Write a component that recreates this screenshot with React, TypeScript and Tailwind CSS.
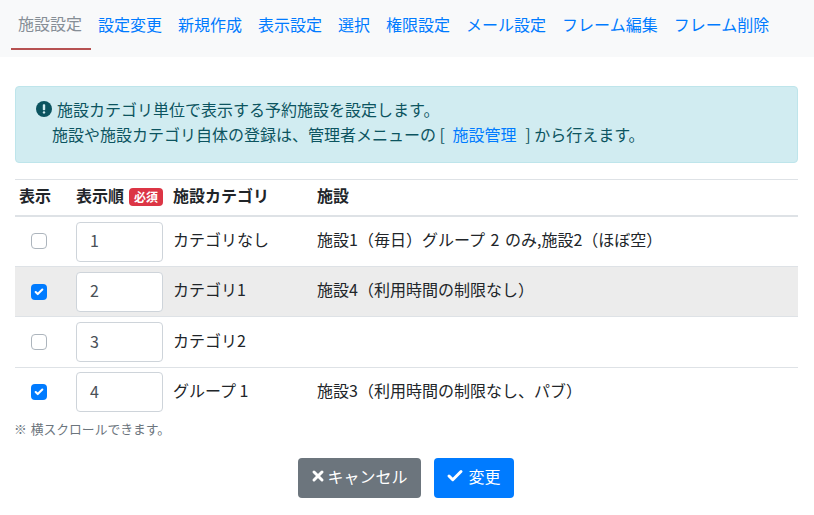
import { Check, X } from "lucide-react";

const tabs = ["設定変更", "新規作成", "表示設定", "選択", "権限設定", "メール設定", "フレーム編集", "フレーム削除"];

const rows = [
  { order: "1", checked: false, category: "カテゴリなし", facility: "施設1（毎日）グループ 2 のみ,施設2（ほぼ空）", height: "h-[51px]", inputPad: "pt-[1px]" },
  { order: "2", checked: true, category: "カテゴリ1", facility: "施設4（利用時間の制限なし）", height: "h-[50px]", inputPad: "", active: true },
  { order: "3", checked: false, category: "カテゴリ2", facility: "", height: "h-[51px]", inputPad: "" },
  { order: "4", checked: true, category: "グループ 1", facility: "施設3（利用時間の制限なし、パブ）", height: "h-[49px]", inputPad: "" },
];

export default function App() {
  return (
    <div className="w-[814px] h-[515px] overflow-hidden bg-white text-[#212529] text-base font-['Noto_Sans_CJK_JP','Noto_Sans',sans-serif]">
      <nav className="flex h-[57px] bg-[#f8f9fa] pl-[11px] pt-[1px]">
        <div className="h-[49px] pl-[7px] pr-[9px] pb-1 flex items-center text-[#868e96] border-b-2 border-[#b65151]">施設設定</div>
        {tabs.map((tab) => (
          <a key={tab} className="h-[49px] pl-[7px] pr-[9px] pb-1 flex items-center text-[#007bff]">{tab}</a>
        ))}
      </nav>

      <div className="pl-[15px] pr-[16px]">
        <div className="mt-[29px] h-[77px] rounded border border-[#bee5eb] bg-[#d1ecf1] text-[#0c5460] pl-5 pt-[10px] leading-6">
          <div className="flex items-center">
            <svg viewBox="0 0 16 16" className="w-4 h-4 mr-[5px] shrink-0">
              <circle cx="8" cy="8" r="8" fill="#0c5460" />
              <rect x="6.8" y="3.2" width="2.4" height="6" rx="0.8" fill="#d1ecf1" />
              <rect x="6.8" y="10.2" width="2.4" height="2.4" rx="1.2" fill="#d1ecf1" />
            </svg>
            <span>施設カテゴリ単位で表示する予約施設を設定します。</span>
          </div>
          <div className="pl-4 mt-[1px]">
            施設や施設カテゴリ自体の登録は、管理者メニューの [ <a className="text-[#007bff] ml-1 mr-[5px]">施設管理</a> ] から行えます。
          </div>
        </div>

        <table className="mt-4 w-[783px] table-fixed border-collapse">
          <thead>
            <tr className="border-t border-b-2 border-t-[#dee2e6] border-b-[#dee2e6] h-[36px] text-left">
              <th className="w-[57px] px-1 pb-1 font-bold">表示</th>
              <th className="w-[97px] px-1 pb-1 font-bold">
                <span className="flex items-center whitespace-nowrap">
                  表示順
                  <span className="ml-[5px] mt-1 rounded bg-[#dc3545] text-white text-[12px] leading-none font-bold px-[5px] py-[3px]">必須</span>
                </span>
              </th>
              <th className="w-[144px] px-1 pb-1 font-bold">施設カテゴリ</th>
              <th className="px-1 pb-1 font-bold">施設</th>
            </tr>
          </thead>
          <tbody>
            {rows.map((row) => (
              <tr key={row.order} className={`${row.height} border-b border-[#dee2e6] last:border-b-0 ${row.active ? "bg-[#ececec]" : ""}`}>
                <td className="px-1">
                  <div className="flex justify-center pr-[10px]">
                    {row.checked ? (
                      <span className="w-4 h-4 rounded bg-[#007bff] flex items-center justify-center">
                        <Check className="w-2.5 h-2.5 text-white" strokeWidth={5} />
                      </span>
                    ) : (
                      <span className="w-4 h-4 rounded border border-[#adb5bd] bg-white" />
                    )}
                  </div>
                </td>
                <td className={`px-1 ${row.inputPad}`}>
                  <div className="w-[87px] h-10 rounded border border-[#ced4da] bg-white flex items-center pl-[13px] pb-[3px] text-[#495057]">{row.order}</div>
                </td>
                <td className="px-1 pb-[5px]">{row.category}</td>
                <td className="px-1 pb-[5px] whitespace-nowrap [word-spacing:2px]">{row.facility}</td>
              </tr>
            ))}
          </tbody>
        </table>

        <p className="mt-[3px] -ml-[1px] text-[12.8px] leading-[18px] text-[#6c757d]">
          <span className="mr-[1px]">※</span> 横スクロールできます。
        </p>

        <div className="mt-5 flex justify-center gap-[13px] pr-[2px]">
          <button className="w-[123px] h-10 rounded bg-[#6c757d] text-white pb-1 flex items-center justify-center">
            <X className="w-4 h-4 mr-[1px]" strokeWidth={4.5} />
            キャンセル
          </button>
          <button className="w-[80px] h-10 rounded bg-[#007bff] text-white pb-1 flex items-center justify-center">
            <Check className="w-[18px] h-[18px] mr-[4px]" strokeWidth={4} />
            変更
          </button>
        </div>
      </div>
    </div>
  );
}
